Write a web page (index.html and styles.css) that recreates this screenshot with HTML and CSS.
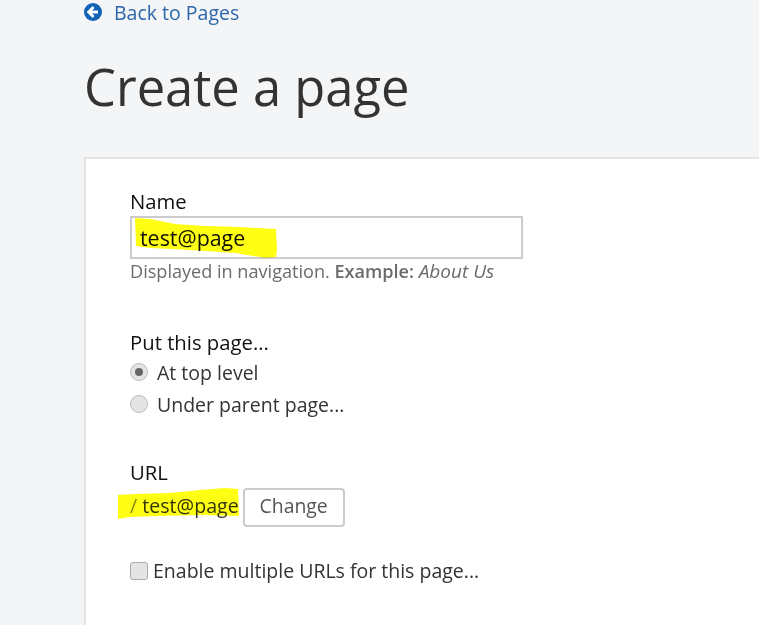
FILE: index.html
```html
<!DOCTYPE html>
<html lang="en">
<head>
    <meta charset="UTF-8">
    <title>Create a page</title>
    <link rel="stylesheet" href="styles.css">
</head>
<body>
    <a class="back-link" href="#">
        <svg class="back-icon" viewBox="0 0 18 18" width="18" height="18">
            <circle cx="9" cy="9" r="9" fill="#0f62b5"/>
            <path d="M9.6 4 L4.6 9 L9.6 14 M5 9 H14" fill="none" stroke="#fff" stroke-width="2.8"/>
        </svg>
        <span>Back to Pages</span>
    </a>

    <h1 class="title">Create a page</h1>

    <form class="card">
        <div class="field name-field">
            <label class="field-label" for="name">Name</label>
            <input class="input" type="text" id="name" value="test@page">
            <p class="hint">Displayed in navigation. <b>Example:</b> <i>About Us</i></p>
        </div>

        <div class="field parent-field">
            <div class="field-label">Put this page...</div>
            <label class="choice"><span class="radio checked"></span>At top level</label>
            <label class="choice"><span class="radio"></span>Under parent page...</label>
        </div>

        <div class="field url-field">
            <div class="field-label">URL</div>
            <div class="url-row">
                <span class="url-value"><span class="slash">/</span> test@page</span>
                <button class="change" type="button">Change</button>
            </div>
        </div>

        <label class="multi"><span class="checkbox"></span>Enable multiple URLs for this page...</label>
    </form>

    <!-- marker scribbles drawn on top of the screenshot -->
    <svg class="marker" viewBox="0 0 759 625" width="759" height="625">
        <path d="M135 218 L150 219 L175 224 L205 226 L240 227 L276 229 L277 250 L276 257 L266 258 L235 253 L190 250 L150 248 L136 246 Z" fill="#ffff14"/>
        <path d="M118 495 L135 494 L170 493 L200 490 L225 488 L238 489 L239 516 L200 515 L160 516 L130 517 L118 519 Z" fill="#ffff14"/>
    </svg>
</body>
</html>
```

FILE: styles.css
```css
html, body {
    height: 100%;
}

body {
    margin: 0;
    padding-left: 84px;
    background-color: #f4f5f7;
    color: #333;
    font-family: "Open Sans", sans-serif;
    overflow: hidden;
}

.back-link {
    display: flex;
    align-items: center;
    gap: 12px;
    height: 24px;
    color: #2b66ab;
    font-size: 19.5px;
    text-decoration: none;
}

.title {
    margin: 27px 0 35px;
    height: 71px;
    font-size: 50.7px;
    line-height: 71px;
    font-weight: 400;
    color: #333;
}

.card {
    box-sizing: border-box;
    height: 468px;
    padding: 29px 44px 0;
    background-color: #fff;
    border: 2px solid #e3e4e6;
    border-right: none;
    border-bottom: none;
    color: #111;
}

.field-label {
    display: block;
    font-size: 20.3px;
    line-height: 27px;
    font-weight: 500;
    color: #111;
}

.input {
    display: block;
    box-sizing: border-box;
    width: 393px;
    height: 43px;
    margin-top: 1px;
    padding: 0 8px;
    border: 2px solid #ccc;
    font-family: inherit;
    font-size: 21.4px;
    color: #111;
}

.hint {
    margin: 0;
    font-size: 18.1px;
    line-height: 25px;
    color: #6b6b6b;
}

.hint b {
    font-weight: 600;
}

.hint i {
    font-size: 19px;
}

.parent-field {
    margin-top: 45px;
}

.choice {
    display: flex;
    align-items: center;
    gap: 9px;
    height: 32px;
    font-size: 19.5px;
    color: #333;
}

.radio {
    box-sizing: border-box;
    width: 18px;
    height: 18px;
    border: 1px solid #bbb;
    border-radius: 50%;
    background-color: #e4e4e4;
    display: flex;
    align-items: center;
    justify-content: center;
}

.radio.checked::after {
    content: "";
    width: 8px;
    height: 8px;
    border-radius: 50%;
    background-color: #666;
}

.url-field {
    margin-top: 39px;
}

.url-row {
    display: flex;
    align-items: center;
    gap: 4px;
    margin-top: 2px;
}

.url-value {
    font-size: 19.6px;
    line-height: 33px;
    padding-bottom: 4px;
    color: #333;
}

.slash {
    color: #888;
}

.change {
    box-sizing: border-box;
    width: 102px;
    height: 39px;
    padding: 0 0 4px;
    background-color: #fff;
    border: 2px solid #ccc;
    border-radius: 4px;
    font-family: inherit;
    font-size: 19.4px;
    color: #555;
}

.multi {
    display: flex;
    align-items: center;
    gap: 5px;
    margin-top: 30px;
    font-size: 19.5px;
    color: #333;
}

.checkbox {
    box-sizing: border-box;
    width: 18px;
    height: 18px;
    border: 1px solid #aaa;
    border-radius: 3px;
    background-color: #e4e4e4;
}

.marker {
    position: absolute;
    left: 0;
    top: 0;
    mix-blend-mode: multiply;
    pointer-events: none;
}
```
